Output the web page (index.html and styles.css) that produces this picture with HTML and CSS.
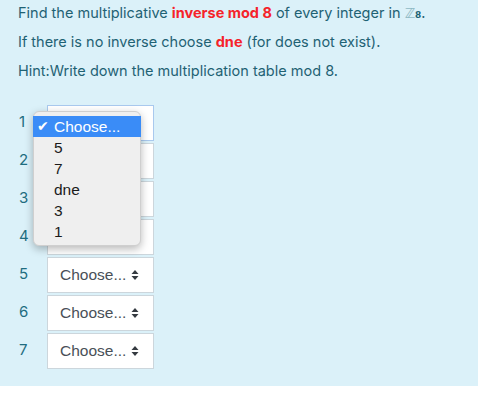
FILE: index.html
```html
<!DOCTYPE html>
<html>
<head>
<meta charset="utf-8">
<link rel="stylesheet" href="styles.css">
</head>
<body>
<div class="formulation">
  <p>Find the multiplicative <span class="red">inverse mod 8</span> of every integer in <span class="math">ℤ<span class="sub">8</span></span>.</p>
  <p>If there is no inverse choose <span class="red">dne</span> (for does not exist).</p>
  <p>Hint:Write down the multiplication table mod 8.</p>
  <div class="rows">
    <div class="row"><span class="num">1</span><div class="select focus"><span class="val">Choose...</span><svg class="arrows" width="8" height="12" viewBox="0 0 8 12"><path d="M4 1 L7.5 5 L0.5 5 Z M4 11 L7.5 7 L0.5 7 Z" fill="#343a40"/></svg></div></div>
    <div class="row"><span class="num">2</span><div class="select"><span class="val">Choose...</span><svg class="arrows" width="8" height="12" viewBox="0 0 8 12"><path d="M4 1 L7.5 5 L0.5 5 Z M4 11 L7.5 7 L0.5 7 Z" fill="#343a40"/></svg></div></div>
    <div class="row"><span class="num">3</span><div class="select"><span class="val">Choose...</span><svg class="arrows" width="8" height="12" viewBox="0 0 8 12"><path d="M4 1 L7.5 5 L0.5 5 Z M4 11 L7.5 7 L0.5 7 Z" fill="#343a40"/></svg></div></div>
    <div class="row"><span class="num">4</span><div class="select"><span class="val">Choose...</span><svg class="arrows" width="8" height="12" viewBox="0 0 8 12"><path d="M4 1 L7.5 5 L0.5 5 Z M4 11 L7.5 7 L0.5 7 Z" fill="#343a40"/></svg></div></div>
    <div class="row"><span class="num">5</span><div class="select"><span class="val">Choose...</span><svg class="arrows" width="8" height="12" viewBox="0 0 8 12"><path d="M4 1 L7.5 5 L0.5 5 Z M4 11 L7.5 7 L0.5 7 Z" fill="#343a40"/></svg></div></div>
    <div class="row"><span class="num">6</span><div class="select"><span class="val">Choose...</span><svg class="arrows" width="8" height="12" viewBox="0 0 8 12"><path d="M4 1 L7.5 5 L0.5 5 Z M4 11 L7.5 7 L0.5 7 Z" fill="#343a40"/></svg></div></div>
    <div class="row"><span class="num">7</span><div class="select"><span class="val">Choose...</span><svg class="arrows" width="8" height="12" viewBox="0 0 8 12"><path d="M4 1 L7.5 5 L0.5 5 Z M4 11 L7.5 7 L0.5 7 Z" fill="#343a40"/></svg></div></div>
  </div>
  <div class="popup">
    <div class="opt sel"><span class="check">✔</span>Choose...</div>
    <div class="opt">5</div>
    <div class="opt">7</div>
    <div class="opt">dne</div>
    <div class="opt">3</div>
    <div class="opt">1</div>
  </div>
</div>
</body>
</html>
```

FILE: styles.css
```css
html, body {
  margin: 0;
  padding: 0;
  background: #ffffff;
}
body {
  font-family: Inter, Roboto, "Liberation Sans", sans-serif;
  font-size: 14.5px;
}
.formulation {
  position: relative;
  background: #dbf1f9;
  color: #1f6274;
  padding: 2px 18px 17px 18px;
  height: 367px;
}
.formulation p {
  margin: 0 0 7px 0;
  height: 22px;
  line-height: 22px;
}
.red {
  color: #f5232a;
  font-weight: bold;
}
.math {
  color: #8fb9c4;
  font-family: "DejaVu Sans", sans-serif;
  font-size: 14px;
  line-height: 0;
}
.math .sub {
  color: #1f6274;
  font-size: 9px;
  font-weight: bold;
  line-height: 0;
}
.rows {
  display: flex;
  flex-direction: column;
  gap: 2px;
  margin-top: 23px;
}
.row {
  display: flex;
  align-items: flex-start;
}
.num {
  width: 28px;
  padding-top: 6px;
  padding-left: 1px;
  line-height: 22px;
  font-size: 15px;
  color: #1f6d80;
}
.select {
  box-sizing: border-box;
  width: 107px;
  height: 36px;
  background: #fff;
  border: 1px solid #ccd6dc;
  display: flex;
  align-items: center;
  padding-left: 12px;
  font-family: "Liberation Sans", Arial, sans-serif;
  font-size: 15.5px;
  color: #495057;
}
.select.focus {
  border-color: #a9c9ee;
}
.arrows {
  flex: none;
  margin-left: auto;
  margin-right: 14px;
}
.popup {
  position: absolute;
  left: 33px;
  top: 111px;
  width: 108px;
  height: 135px;
  box-sizing: border-box;
  padding-top: 4px;
  background: #efefef;
  border-radius: 6px;
  border: 1px solid #cfcfcf;
  box-shadow: 0 3px 8px rgba(0, 0, 0, 0.28);
  font-family: "Liberation Sans", Arial, sans-serif;
  font-size: 15.5px;
  color: #1b1b1b;
}
.opt {
  height: 21px;
  line-height: 21px;
  padding-left: 20px;
  position: relative;
}
.opt.sel {
  background: #3a8cf7;
  color: #fff;
  margin: 0 -1px;
  padding-left: 21px;
}
.check {
  position: absolute;
  left: 4px;
  font-family: "DejaVu Sans", sans-serif;
  font-size: 14px;
}
```
